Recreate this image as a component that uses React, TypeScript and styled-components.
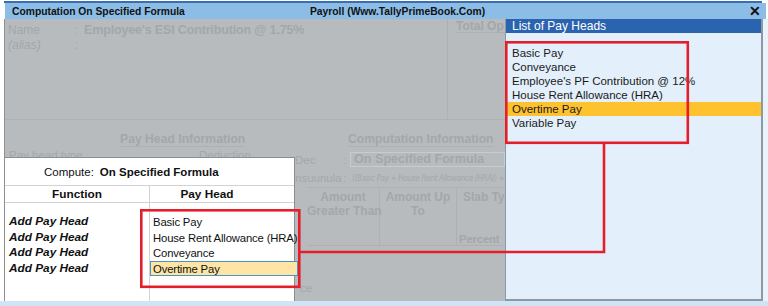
import React from 'react'
import styled, { createGlobalStyle } from 'styled-components'

const GlobalStyle = createGlobalStyle`
  html, body { margin:0; padding:0; background:#fff; }
  body { font-family: "Liberation Sans", Arial, sans-serif; }
  * { box-sizing: border-box; }
`

const Screen = styled.div`
  position:relative;
  width:768px;
  height:306px;
  overflow:hidden;
  background:#fff;
  display:flex;
  flex-direction:column;
`
const TopRule = styled.div`
  height:2px;
  margin:1px 6px 0 4px;
  background:#3a6db4;
`
const TitleBar = styled.div`
  height:16px;
  margin:0 2px 0 5px;
  padding:0 5px 0 7px;
  background:#8bbde6;
  display:flex;
  align-items:center;
  font-size:10.3px;
  font-weight:700;
  color:#111;
  white-space:nowrap;
`
const TitleLeft = styled.span`
  width:298px;
`
const TitleCenter = styled.span`
  flex:1;
`
const CloseMark = styled.span`
  font-size:14px;
  line-height:1;
`
const Body = styled.div`
  display:flex;
  height:282px;
  margin-left:4px;
`
const GrayMain = styled.div`
  width:501px;
  border-left:1px solid #8d9093;
  background:#b7bbbe;
  color:#a3a7aa;
  display:flex;
  flex-direction:column;
  overflow:hidden;
`
const TopSection = styled.div`
  height:101px;
  display:flex;
  border-bottom:1px solid #adb1b4;
`
const NameFields = styled.div`
  flex:1;
  padding:3px 0 0 3px;
`
const FieldRow = styled.div`
  display:grid;
  grid-template-columns:67px 9px auto;
  height:15px;
  align-items:center;
  font-size:12px;
  white-space:nowrap;
`
const FieldLabel = styled.span<{ $italic?: boolean }>`
  font-style:${p => (p.$italic ? 'italic' : 'normal')};
`
const FieldValue = styled.span`
  font-size:12.6px;
  font-weight:700;
  letter-spacing:-0.2px;
`
const TotalCol = styled.div`
  width:58px;
  border-left:1px solid #adb1b4;
`
const TotalHead = styled.div`
  margin:0 0 0 8px;
  height:14px;
  font-size:12px;
  font-weight:700;
  white-space:nowrap;
  border-bottom:1px solid #adb1b4;
`
const InfoSection = styled.div`
  display:grid;
  grid-template-columns:290px 1fr;
  flex:1;
`
const InfoCol = styled.div`
  display:flex;
  flex-direction:column;
  white-space:nowrap;
  min-width:0;
`
const SectionHead = styled.div<{ $indent: number }>`
  margin:12px 0 0 ${p => p.$indent}px;
  height:15px;
  font-size:12.2px;
  font-weight:700;
  align-self:flex-start;
  border-bottom:1px solid #adb1b4;
`
const FaintRow = styled.div`
  display:grid;
  grid-template-columns:190px 1fr;
  padding:2px 0 0 4px;
  height:18px;
  font-size:11.5px;
`
const FormRow = styled.div<{ $h: number; $gap?: number }>`
  display:grid;
  grid-template-columns:48px 7px 1fr;
  align-items:center;
  height:${p => p.$h}px;
  margin-top:${p => p.$gap ?? 0}px;
  font-size:11.5px;
`
const ValueBox = styled.div`
  height:15px;
  border:1px solid #c3cdd4;
  padding-left:3px;
  font-size:12.6px;
  font-weight:700;
  line-height:13px;
`
const FormulaText = styled.span`
  font-family:"Liberation Sans Narrow", "DejaVu Sans Condensed", "Liberation Sans", sans-serif;
  font-size:8px;
  font-style:italic;
  letter-spacing:-0.3px;
  padding-left:2px;
`
const SlabTable = styled.div`
  margin-left:12px;
  display:grid;
  grid-template-columns:73px 77px 1fr;
  grid-template-rows:34px 23px;
  border-top:1px solid #adb1b4;
  border-bottom:1px solid #adb1b4;
`
const SlabCell = styled.div<{ $last?: boolean; $end?: boolean }>`
  border-right:${p => (p.$last ? 'none' : '1px solid #adb1b4')};
  font-size:12px;
  font-weight:700;
  text-align:${p => (p.$last ? 'left' : 'center')};
  padding-left:${p => (p.$last ? 6 : 0)}px;
  line-height:14px;
  padding-top:${p => (p.$end ? 10 : 2)}px;
  white-space:nowrap;
`
const PercentCell = styled(SlabCell)`
  padding-left:2px;
  font-size:11.4px;
  letter-spacing:-0.2px;
`
const TailLabel = styled.div`
  margin:36px 0 0 5px;
  font-size:11.5px;
`
const ListPanel = styled.div`
  width:258px;
  border-left:1px solid #8c99a5;
  border-right:2px solid #8c99a5;
  border-bottom:2px solid #8c99a5;
  background:#e3f0fb;
  display:flex;
  flex-direction:column;
`
const ListHeader = styled.div`
  height:14px;
  background:#2b64ae;
  color:#fff;
  font-size:12px;
  line-height:14px;
  padding-left:6px;
`
const ListBody = styled.div`
  padding-top:13px;
`
const ListItem = styled.div<{ $active?: boolean }>`
  height:14px;
  line-height:14px;
  padding-left:6px;
  font-size:11.5px;
  color:#1a1a1a;
  background:${p => (p.$active ? '#ffc22f' : 'transparent')};
`
const RightStrip = styled.div`
  flex:1;
  background:#eaf3fa;
`
const BottomStrip = styled.div`
  height:5px;
  background:#cfe4f6;
`
const Popup = styled.div`
  position:absolute;
  left:4px;
  top:157px;
  width:291px;
  height:144px;
  background:#fff;
  border:1px solid #8c8f92;
  border-bottom:none;
  display:flex;
  flex-direction:column;
  color:#111;
`
const ComputeLine = styled.div`
  height:27px;
  display:flex;
  align-items:center;
  padding-left:39px;
  font-size:11.5px;
  white-space:nowrap;
`
const ComputeValue = styled.b`
  margin-left:6px;
`
const PopupGrid = styled.div`
  display:grid;
  grid-template-columns:145px 1fr;
`
const HeaderRow = styled(PopupGrid)`
  height:18px;
  border-top:1px solid #d0d4d8;
  border-bottom:1px solid #d0d4d8;
  font-size:11.8px;
  font-weight:700;
`
const HeadCell = styled.div<{ $divider?: boolean; $pad?: number }>`
  display:flex;
  align-items:center;
  justify-content:center;
  padding-right:${p => p.$pad ?? 0}px;
  border-right:${p => (p.$divider ? '1px solid #d0d4d8' : 'none')};
`
const RowsGrid = styled(PopupGrid)`
  flex:1;
`
const FunctionCol = styled.div`
  border-right:1px solid #d0d4d8;
  padding:11px 0 0 4px;
`
const PayHeadCol = styled.div`
  padding-top:11px;
`
const FunctionCell = styled.div`
  height:15.6px;
  line-height:15.6px;
  font-size:11.8px;
  font-weight:700;
  font-style:italic;
`
const PayHeadCell = styled.div<{ $active?: boolean }>`
  height:15.6px;
  line-height:14px;
  font-size:11.3px;
  padding-left:2px;
  letter-spacing:-0.15px;
  white-space:nowrap;
  border:1px solid ${p => (p.$active ? '#4b93c4' : 'transparent')};
  background:${p => (p.$active ? '#fee4a5' : 'transparent')};
`
const Annotations = styled.svg`
  position:absolute;
  left:0;
  top:0;
  pointer-events:none;
`

const listHeads = [
  'Basic Pay',
  'Conveyance',
  "Employee's PF Contribution @ 12%",
  'House Rent Allowance (HRA)',
  'Overtime Pay',
  'Variable Pay',
]
const formulaHeads = ['Basic Pay', 'House Rent Allowance (HRA)', 'Conveyance', 'Overtime Pay']

const App = () => {
  return (
    <Screen>
      <GlobalStyle />
      <TopRule />
      <TitleBar>
        <TitleLeft>Computation On Specified Formula</TitleLeft>
        <TitleCenter>Payroll (Www.TallyPrimeBook.Com)</TitleCenter>
        <CloseMark>✕</CloseMark>
      </TitleBar>
      <Body>
        <GrayMain>
          <TopSection>
            <NameFields>
              <FieldRow>
                <FieldLabel>Name</FieldLabel>
                <span>:</span>
                <FieldValue>Employee's ESI Contribution @ 1.75%</FieldValue>
              </FieldRow>
              <FieldRow>
                <FieldLabel $italic>(alias)</FieldLabel>
                <span>:</span>
                <span />
              </FieldRow>
            </NameFields>
            <TotalCol>
              <TotalHead>Total Op</TotalHead>
            </TotalCol>
          </TopSection>
          <InfoSection>
            <InfoCol>
              <SectionHead $indent={115}>Pay Head Information</SectionHead>
              <FaintRow>
                <span>Pay head type</span>
                <span>Deduction</span>
              </FaintRow>
            </InfoCol>
            <InfoCol>
              <SectionHead $indent={53}>Computation Information</SectionHead>
              <FormRow $h={19} $gap={3}>
                <span>Dec</span>
                <span>:</span>
                <ValueBox>On Specified Formula</ValueBox>
              </FormRow>
              <FormRow $h={18}>
                <span>nsuunula</span>
                <span>:</span>
                <FormulaText>((Basic Pay + House Rent Allowance (HRA)) + (</FormulaText>
              </FormRow>
              <SlabTable>
                <SlabCell>Amount<br />Greater Than</SlabCell>
                <SlabCell>Amount Up<br />To</SlabCell>
                <SlabCell $last>Slab Ty</SlabCell>
                <SlabCell />
                <SlabCell />
                <PercentCell $last $end>Percent</PercentCell>
              </SlabTable>
              <TailLabel>ce</TailLabel>
            </InfoCol>
          </InfoSection>
        </GrayMain>
        <ListPanel>
          <ListHeader>List of Pay Heads</ListHeader>
          <ListBody>
            {listHeads.map(h => (
              <ListItem key={h} $active={h === 'Overtime Pay'}>{h}</ListItem>
            ))}
          </ListBody>
        </ListPanel>
        <RightStrip />
      </Body>
      <BottomStrip />

      <Popup>
        <ComputeLine>
          Compute:<ComputeValue>On Specified Formula</ComputeValue>
        </ComputeLine>
        <HeaderRow>
          <HeadCell $divider>Function</HeadCell>
          <HeadCell $pad={30}>Pay Head</HeadCell>
        </HeaderRow>
        <RowsGrid>
          <FunctionCol>
            {formulaHeads.map(h => (
              <FunctionCell key={h}>Add Pay Head</FunctionCell>
            ))}
          </FunctionCol>
          <PayHeadCol>
            {formulaHeads.map(h => (
              <PayHeadCell key={h} $active={h === 'Overtime Pay'}>{h}</PayHeadCell>
            ))}
          </PayHeadCol>
        </RowsGrid>
      </Popup>

      <Annotations width="768" height="306" viewBox="0 0 768 306">
        <g fill="none" stroke="#e51e2b" strokeWidth="2.6">
          <rect x="506.3" y="42.3" width="181.5" height="100.5" />
          <rect x="141.3" y="210.3" width="158" height="76.5" />
          <polyline points="604,143 604,252 300,252" />
        </g>
      </Annotations>
    </Screen>
  )
}

export default App
